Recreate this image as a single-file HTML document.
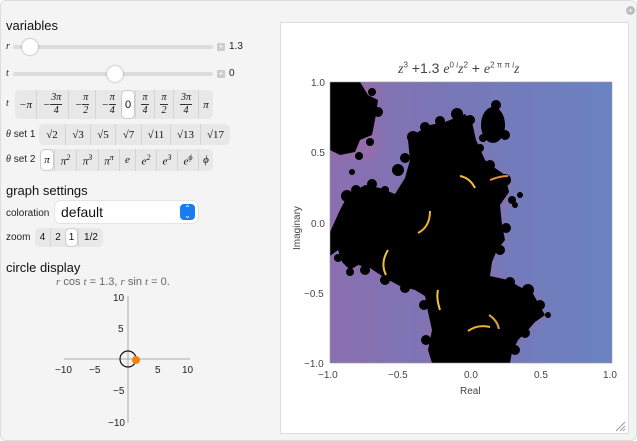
<!DOCTYPE html>
<html><head><meta charset="utf-8"><style>
*{margin:0;padding:0;box-sizing:border-box}
body{width:637px;height:441px;background:#fff;font-family:"Liberation Sans",sans-serif;position:relative;overflow:hidden;color:#111}
.outer{position:absolute;left:0;top:0;width:637px;height:441px;background:#f4f4f4;border:1px solid #ddd;border-radius:6px}
.a{position:absolute;white-space:nowrap}
.h{font-size:13px;color:#111}
.s{font-size:10px;color:#222}
.i{font-style:italic;font-family:"Liberation Serif",serif}
.bar{position:absolute;background:#e8e8e8;border-radius:5px;display:flex;align-items:center;font-size:11px}
.bar>div{display:flex;align-items:center;justify-content:center;height:100%;border-left:1px solid #d4d4d4;font-family:"Liberation Serif",serif;font-style:italic}
.bar>div:first-child{border-left:none}
.bar>div.w{background:#fff;border-radius:5px;border:1px solid #ccc}
.fr{display:inline-flex;flex-direction:column;align-items:center;line-height:12px;font-size:10px}
.fr span:first-child{border-bottom:1px solid #333;padding:0 1px}
.track{position:absolute;height:4px;background:#ddd;border-radius:2px}
.knob{position:absolute;width:16px;height:16px;border-radius:50%;background:#fff;box-shadow:0 0 2px rgba(0,0,0,.4)}
.plus{position:absolute;width:8px;height:8px;background:#ccc;border-radius:1px;color:#fff;font-size:8px;line-height:8px;text-align:center}
</style></head><body>
<div class="outer"></div>
<div class="a" style="left:626px;top:6px;width:9px;height:9px;border-radius:50%;background:#bbb;color:#fff;font-size:8px;line-height:9px;text-align:center">+</div>
<div class="a" style="left:280px;top:22px;width:349px;height:412px;background:#fff;border:1px solid #ddd"></div>

<div class="a h" style="left:6px;top:18px">variables</div>
<div class="a s i" style="left:6px;top:41px">r</div>
<div class="track" style="left:13px;top:45px;width:200px"></div>
<div class="knob" style="left:22px;top:39px"></div>
<div class="plus" style="left:217px;top:43px">+</div>
<div class="a s" style="left:229px;top:41px">1.3</div>
<div class="a s i" style="left:6px;top:68px">t</div>
<div class="track" style="left:13px;top:72px;width:200px"></div>
<div class="knob" style="left:107px;top:66px"></div>
<div class="plus" style="left:217px;top:70px">+</div>
<div class="a s" style="left:229px;top:68px">0</div>

<div class="a s i" style="left:6px;top:98px">t</div>
<div class="bar" style="left:15px;top:90px;width:198px;height:29px">
<div style="width:21px">−π</div>
<div style="width:32px">−<span class="fr"><span>3π</span><span>4</span></span></div>
<div style="width:27px">−<span class="fr"><span>π</span><span>2</span></span></div>
<div style="width:26px">−<span class="fr"><span>π</span><span>4</span></span></div>
<div class="w" style="width:14px;font-style:normal;font-family:'Liberation Sans'">0</div>
<div style="width:19px"><span class="fr"><span>π</span><span>4</span></span></div>
<div style="width:19px"><span class="fr"><span>π</span><span>2</span></span></div>
<div style="width:25px"><span class="fr"><span>3π</span><span>4</span></span></div>
<div style="width:15px">π</div>
</div>

<div class="a s" style="left:6px;top:129px"><span class="i">θ</span> set 1</div>
<div class="bar" style="left:39px;top:124px;width:191px;height:21px">
<div style="width:26px;font-style:normal">√2</div><div style="width:25px;font-style:normal">√3</div><div style="width:25px;font-style:normal">√5</div><div style="width:26px;font-style:normal">√7</div><div style="width:29px;font-style:normal">√11</div><div style="width:30px;font-style:normal">√13</div><div style="width:30px;font-style:normal">√17</div>
</div>

<div class="a s" style="left:6px;top:154px"><span class="i">θ</span> set 2</div>
<div class="bar" style="left:40px;top:149px;width:173px;height:22px">
<div class="w" style="width:14px">π</div><div style="width:22px"><span>π<sup style="font-size:8px">2</sup></span></div><div style="width:22px"><span>π<sup style="font-size:8px">3</sup></span></div><div style="width:21px"><span>π<sup style="font-size:8px">π</sup></span></div><div style="width:16px">e</div><div style="width:21px"><span>e<sup style="font-size:8px">2</sup></span></div><div style="width:21px"><span>e<sup style="font-size:8px">3</sup></span></div><div style="width:21px"><span>e<sup style="font-size:8px">ϕ</sup></span></div><div style="width:15px">ϕ</div>
</div>

<div class="a h" style="left:6px;top:183px">graph settings</div>
<div class="a s" style="left:6px;top:208px">coloration</div>
<div class="a" style="left:55px;top:201px;width:143px;height:22px;background:#fff;border-radius:5px;box-shadow:0 0 1px rgba(0,0,0,.4);font-size:14px;padding:3px 6px">default
<div style="position:absolute;right:3px;top:3px;width:15px;height:16px;background:#1a7cf5;border-radius:4px;color:#fff;font-size:8px;line-height:7px;text-align:center;padding-top:1px">⌃<br>⌄</div></div>
<div class="a s" style="left:6px;top:232px">zoom</div>
<div class="bar" style="left:35px;top:228px;width:68px;height:19px;font-size:10px">
<div style="width:15px;font-style:normal;font-family:'Liberation Sans'">4</div><div style="width:15px;font-style:normal;font-family:'Liberation Sans'">2</div><div class="w" style="width:13px;font-style:normal;font-family:'Liberation Sans'">1</div><div style="width:25px;font-style:normal;font-family:'Liberation Sans'">1/2</div>
</div>

<div class="a h" style="left:6px;top:260px">circle display</div>
<div class="a" style="left:56px;top:276px;font-size:11px;color:#666"><span class="i">r</span> cos <span class="i">t</span> = 1.3, <span class="i">r</span> sin <span class="i">t</span> = 0.</div>
<svg class="a" style="left:0;top:290px" width="270" height="140" font-family="Liberation Sans" font-size="10" fill="#222">
<line x1="64" y1="69" x2="190" y2="69" stroke="#aaa"/>
<line x1="128" y1="6" x2="128" y2="133" stroke="#aaa"/>
<circle cx="128" cy="69" r="8" fill="none" stroke="#111" stroke-width="1.2"/>
<circle cx="136" cy="70" r="4" fill="#f5820a"/>
<text x="55" y="83">−10</text><text x="89" y="83">−5</text><text x="155" y="83">5</text><text x="182" y="83">10</text>
<text x="113" y="11">10</text><text x="118" y="42">5</text><text x="113" y="104">−5</text><text x="108" y="136">−10</text>
</svg>

<div class="a" style="left:398px;top:60px;font-size:14px;color:#444"><span class="i">z</span><sup style="font-size:8px">3</sup> +1.3 <span class="i">e</span><sup style="font-size:8px">0 <i>i</i></sup><span class="i">z</span><sup style="font-size:8px">2</sup> + <span class="i">e</span><sup style="font-size:8px">2 π π <i>i</i></sup><span class="i">z</span></div>
<svg class="a" style="left:280px;top:70px" width="349" height="330" font-family="Liberation Sans" font-size="10" fill="#444">
<defs><linearGradient id="g" x1="0" y1="0" x2="1" y2="0"><stop offset="0" stop-color="#8a6fb0"/><stop offset=".5" stop-color="#7678b8"/><stop offset="1" stop-color="#6b83c2"/></linearGradient>
<filter id="f"><feGaussianBlur stdDeviation="5"/></filter>
<clipPath id="c"><rect x="330" y="82" width="282" height="281"/></clipPath></defs>
<rect x="50" y="12" width="282" height="281" fill="url(#g)"/>
<g transform="translate(-280,-70)" clip-path="url(#c)">
<g filter="url(#f)" fill="#9c6aa6" opacity=".7">
<polygon points="330,232 345,200 370,185 395,195 410,175 415,140 430,125 450,120 465,115 475,125 478,145 490,170 505,175 510,195 500,215 505,240 495,255 490,275 515,285 530,290 545,315 530,330 515,345 510,363 430,363 425,345 430,320 425,295 400,285 380,275 360,265 350,270 340,250 330,255"/>
<rect x="330" y="82" width="48" height="78"/></g>
<g fill="#000">
<polygon points="330,232 340,210 348,195 365,185 380,188 395,194 405,178 410,160 408,140 418,132 430,125 445,122 455,118 465,114 472,122 476,140 485,160 495,168 505,175 509,192 500,205 502,225 505,240 497,250 492,262 490,276 508,280 520,287 532,292 545,315 535,322 528,330 518,340 512,352 510,363 432,363 428,350 432,330 428,312 425,296 415,290 400,286 385,278 370,268 358,265 350,270 342,262 338,250 330,256"/>
<polygon points="330,82 360,82 368,95 378,100 375,120 372,135 360,140 355,152 340,155 330,150"/>
<ellipse cx="493" cy="125" rx="12" ry="18"/>
<g>
<circle cx="347" cy="196" r="6"/><circle cx="356" cy="190" r="5"/><circle cx="372" cy="184" r="5"/><circle cx="385" cy="190" r="4"/><circle cx="398" cy="170" r="6"/><circle cx="405" cy="158" r="5"/><circle cx="413" cy="137" r="6"/><circle cx="425" cy="127" r="5"/><circle cx="440" cy="121" r="5"/><circle cx="457" cy="114" r="6"/><circle cx="470" cy="120" r="5"/><circle cx="480" cy="148" r="4"/><circle cx="490" cy="165" r="5"/><circle cx="505" cy="180" r="6"/><circle cx="512" cy="200" r="4"/><circle cx="506" cy="228" r="5"/><circle cx="500" cy="250" r="5"/><circle cx="510" cy="282" r="5"/><circle cx="528" cy="290" r="6"/><circle cx="540" cy="305" r="5"/><circle cx="548" cy="315" r="3"/><circle cx="525" cy="333" r="5"/><circle cx="515" cy="350" r="5"/><circle cx="426" cy="340" r="5"/><circle cx="424" cy="305" r="5"/><circle cx="405" cy="288" r="5"/><circle cx="385" cy="280" r="5"/><circle cx="365" cy="270" r="5"/><circle cx="350" cy="272" r="4"/><circle cx="338" cy="258" r="4"/><circle cx="359" cy="156" r="4"/><circle cx="370" cy="142" r="4"/><circle cx="378" cy="112" r="5"/><circle cx="372" cy="92" r="4"/><circle cx="496" cy="105" r="5"/><circle cx="505" cy="135" r="5"/><circle cx="483" cy="138" r="4"/><circle cx="520" cy="195" r="3"/><circle cx="515" cy="205" r="3"/><circle cx="352" cy="172" r="3"/><circle cx="442" cy="363" r="5"/>
</g>
</g>
<g fill="none" stroke-width="2">
<path d="M460,176 q10,2 15,12" stroke="#f0c040"/><path d="M418,233 q12,-6 12,-22" stroke="#f0b030"/>
<path d="M386,275 q-6,-12 2,-25" stroke="#f0c040"/><path d="M440,310 q-4,-12 -2,-20" stroke="#f0c040"/>
<path d="M468,331 q10,-7 22,-4" stroke="#f0b030"/><path d="M489,315 q8,5 10,14" stroke="#e0a030"/>
<path d="M490,180 q10,-4 18,-4" stroke="#e09030"/>
</g>
</g>
<rect x="50" y="12" width="282" height="281" fill="none" stroke="#999" stroke-width=".6"/>
<text x="31" y="16">1.0</text><text x="31" y="86">0.5</text><text x="31" y="157">0.0</text><text x="24" y="227">−0.5</text><text x="24" y="297">−1.0</text>
<text x="38" y="308">−1.0</text><text x="108" y="308">−0.5</text><text x="184" y="308">0.0</text><text x="254" y="308">0.5</text><text x="323" y="308">1.0</text>
<text x="180" y="324" font-size="10">Real</text>
<text transform="translate(20,180) rotate(-90)">Imaginary</text>
</svg>
<svg class="a" style="left:614px;top:420px" width="12" height="12"><path d="M2,11 L11,2 M6,11 L11,6 M9,11 L11,9" stroke="#999"/></svg>
</body></html>
